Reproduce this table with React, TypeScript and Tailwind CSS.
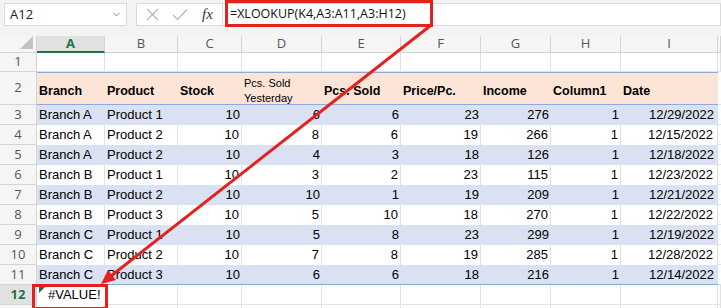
import { ChevronDown } from "lucide-react";

type Row = [string, string, number, number, number, number, number, number, string];

const rows: Row[] = [
    ["Branch A", "Product 1", 10, 6, 6, 23, 276, 1, "12/29/2022"],
    ["Branch A", "Product 2", 10, 8, 6, 19, 266, 1, "12/15/2022"],
    ["Branch A", "Product 2", 10, 4, 3, 18, 126, 1, "12/18/2022"],
    ["Branch B", "Product 1", 10, 3, 2, 23, 115, 1, "12/23/2022"],
    ["Branch B", "Product 2", 10, 10, 1, 19, 209, 1, "12/21/2022"],
    ["Branch B", "Product 3", 10, 5, 10, 18, 270, 1, "12/22/2022"],
    ["Branch C", "Product 1", 10, 5, 8, 23, 299, 1, "12/19/2022"],
    ["Branch C", "Product 2", 10, 7, 8, 19, 285, 1, "12/28/2022"],
    ["Branch C", "Product 3", 10, 6, 6, 18, 216, 1, "12/14/2022"],
];

const letters = ["A", "B", "C", "D", "E", "F", "G", "H", "I", ""];

const cols = "grid-cols-[37px_68px_73px_64px_80px_79px_80px_70px_70px_97px_1fr]";
const ui = "font-['Open_Sans',sans-serif]";
const cellFont = "font-['Liberation_Sans',Arial,sans-serif] text-[13px] text-black";

function RowHead({ n, active }: { n?: number; active?: boolean }) {
    return (
        <div
            className={`${ui} flex items-center justify-center border-r border-b border-[#d4d4d4] text-[13px] ${
                active ? "bg-[#e1e1e1] text-[#217346] font-bold" : "bg-[#f5f5f5] text-[#555]"
            }`}
        >
            {n}
        </div>
    );
}

function Toolbar() {
    return (
        <div className="h-[36px] bg-[#f3f3f3] flex items-start pt-[3px] pl-[4px] gap-[9px]">
            <div className={`${ui} w-[123px] h-[23px] bg-white border border-[#dadada] flex items-center justify-between pl-[5px] pr-[4px] text-[13px] text-[#222]`}>
                <span>A12</span>
                <ChevronDown size={11} strokeWidth={1.5} className="text-[#555]" />
            </div>
            <div className="flex h-[23px] flex-1">
                <div className="w-[87px] bg-white border border-[#dadada] flex items-center gap-[13px] pl-[9px]">
                    <svg width="13" height="13" viewBox="0 0 13 13" stroke="#b5b5b5" strokeWidth="1.2" fill="none">
                        <path d="M1 1L12 12M12 1L1 12" />
                    </svg>
                    <svg width="16" height="13" viewBox="0 0 16 13" stroke="#b5b5b5" strokeWidth="1.2" fill="none">
                        <path d="M1 7L5.5 11.5L15 1.5" />
                    </svg>
                    <span className="font-['Liberation_Serif',serif] italic text-[15px] text-[#333] ml-[1px]">
                        fx
                    </span>
                </div>
                <div className={`${ui} flex-1 bg-white border border-l-0 border-[#dadada] flex items-center pl-[7px] text-[12.5px] text-[#111]`}>
                    =XLOOKUP(K4,A3:A11,A3:H12)
                </div>
            </div>
        </div>
    );
}

export default function App() {
    return (
        <div className="relative w-[721px] h-[308px] overflow-hidden bg-white">
            <Toolbar />

            <div className={`grid ${cols} grid-rows-[17px_19px_33px_repeat(10,20px)_20px]`}>
                {/* column headers */}
                <div className="relative bg-[#f5f5f5] border-r border-b border-[#d4d4d4]">
                    <div className="absolute right-[3px] bottom-[3px] w-0 h-0 border-l-[13px] border-l-transparent border-b-[13px] border-b-[#c3c3c3]" />
                </div>
                {letters.map((l, i) => (
                    <div
                        key={i}
                        className={`${ui} flex items-center justify-center text-[13px] border-r border-[#d4d4d4] ${
                            i === 0
                                ? "bg-[#e1e1e1] text-[#217346] font-bold border-b-2 border-b-[#217346]"
                                : "bg-[#f5f5f5] text-[#555] border-b"
                        }`}
                    >
                        {l}
                    </div>
                ))}

                {/* row 1 */}
                <RowHead n={1} />
                {letters.map((_, i) => (
                    <div key={i} className="border-r border-b border-[#e1e1e1]" />
                ))}

                {/* row 2 - table header */}
                <RowHead n={2} />
                {["Branch", "Product", "Stock", "", "Pcs. Sold", "Price/Pc.", "Income", "Column1", "Date"].map((h, i) =>
                    i === 3 ? (
                        <div
                            key={i}
                            className="bg-[#fce4d6] border-t border-b border-[#8ea9db] font-['Liberation_Sans',Arial,sans-serif] text-[11px] leading-[15px] text-black pl-[2px] pt-[3px]"
                        >
                            Pcs. Sold
                            <br />
                            Yesterday
                        </div>
                    ) : (
                        <div
                            key={i}
                            className="bg-[#fce4d6] border-t border-b border-[#8ea9db] font-['Liberation_Sans',Arial,sans-serif] font-bold text-[12.5px] text-black flex items-end pl-[2px] pb-[3px] whitespace-nowrap"
                        >
                            {h}
                        </div>
                    )
                )}
                <div className="border-b border-[#e1e1e1]" />

                {/* data rows */}
                {rows.map((r, ri) => {
                    const blue = ri % 2 === 0;
                    const last = ri === rows.length - 1;
                    return [
                        <RowHead key={`h${ri}`} n={ri + 3} />,
                        ...r.map((v, ci) => (
                            <div
                                key={`${ri}-${ci}`}
                                className={`${cellFont} flex items-center px-[2px] whitespace-nowrap ${
                                    typeof v === "number" || ci === 8 ? "justify-end" : "justify-start"
                                } ${blue ? "bg-[#d9e1f2]" : "bg-white border-r border-[#e1e1e1]"} ${
                                    last ? "border-b border-b-[#8ea9db]" : ""
                                } ${ci === 8 ? "pr-[4px]" : ""}`}
                            >
                                {v}
                            </div>
                        )),
                        <div key={`e${ri}`} className="border-b border-[#e1e1e1]" />,
                    ];
                })}

                {/* row 12 */}
                <RowHead n={12} active />
                <div className={`${cellFont} relative flex items-center pl-[11px]`}>
                    <div className="absolute left-[2px] top-[2px] w-0 h-0 border-t-[6px] border-t-[#217346] border-r-[6px] border-r-transparent" />
                    #VALUE!
                </div>
                {letters.slice(1).map((_, i) => (
                    <div key={i} className="border-r border-b border-[#e1e1e1]" />
                ))}

                {/* row 13, mostly off-screen */}
                <RowHead />
                {letters.map((_, i) => (
                    <div key={i} className="border-r border-[#e1e1e1]" />
                ))}
            </div>

            {/* annotations */}
            <div className="absolute left-[225px] top-0 w-[208px] h-[27px] border-[3px] border-[#e3211f]" />
            <div className="absolute left-[32px] top-[284px] w-[76px] h-[26px] border-[3px] border-[#e3211f]" />
            <svg className="absolute inset-0 pointer-events-none" width="721" height="308">
                <line x1="430" y1="26" x2="111" y2="276" stroke="#e3211f" strokeWidth="3" />
                <polygon points="101,284 116,280 108,270" fill="#e3211f" />
            </svg>
        </div>
    );
}
